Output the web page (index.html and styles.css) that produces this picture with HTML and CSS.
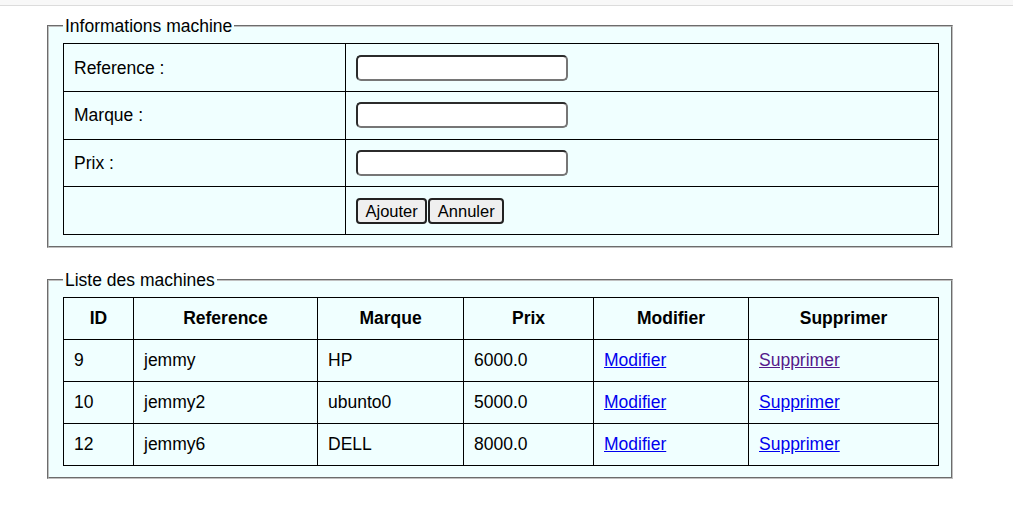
FILE: index.html
```html
<!DOCTYPE html>
<html lang="fr">
<head>
<meta charset="utf-8">
<title>Machines</title>
<link rel="stylesheet" href="styles.css">
</head>
<body>
<div class="topbar"></div>
<div class="page">
  <fieldset class="box box-form">
    <legend>Informations machine</legend>
    <table class="grid form-grid">
      <colgroup><col class="c-label"><col class="c-field"></colgroup>
      <tr><td>Reference :</td><td><input type="text" class="field"></td></tr>
      <tr><td>Marque :</td><td><input type="text" class="field"></td></tr>
      <tr><td>Prix :</td><td><input type="text" class="field"></td></tr>
      <tr><td></td><td class="actions"><button class="btn">Ajouter</button><button class="btn">Annuler</button></td></tr>
    </table>
  </fieldset>

  <fieldset class="box box-list">
    <legend>Liste des machines</legend>
    <table class="grid list-grid">
      <colgroup>
        <col class="c-id"><col class="c-ref"><col class="c-marque"><col class="c-prix"><col class="c-mod"><col class="c-sup">
      </colgroup>
      <tr><th>ID</th><th>Reference</th><th>Marque</th><th>Prix</th><th>Modifier</th><th>Supprimer</th></tr>
      <tr><td>9</td><td>jemmy</td><td>HP</td><td>6000.0</td><td><a href="#m9">Modifier</a></td><td><a class="visited" href="#s9">Supprimer</a></td></tr>
      <tr><td>10</td><td>jemmy2</td><td>ubunto0</td><td>5000.0</td><td><a href="#m10">Modifier</a></td><td><a href="#s10">Supprimer</a></td></tr>
      <tr><td>12</td><td>jemmy6</td><td>DELL</td><td>8000.0</td><td><a href="#m12">Modifier</a></td><td><a href="#s12">Supprimer</a></td></tr>
    </table>
  </fieldset>
</div>
</body>
</html>
```

FILE: styles.css
```css
html, body {
  margin: 0;
  padding: 0;
  background: #ffffff;
}
body {
  font-family: "Liberation Sans", Arial, sans-serif;
  font-size: 17.5px;
  color: #000;
}
.topbar {
  height: 5px;
  background: #f8f8f8;
  border-bottom: 1px solid #dcdcdc;
}
.page {
  padding: 0 0 0 47px;
}
.box {
  width: 875px;
  margin: 0;
  padding: 7px 12px 11px 14px;
  border: 2px groove #c0c0c0;
  background: #f0ffff;
}
.box-form {
  margin-top: 10px;
}
.box-list {
  margin-top: 22px;
}
.box legend {
  padding: 0 2px;
  line-height: 20px;
}
.grid {
  border-collapse: collapse;
  table-layout: fixed;
  width: 875px;
}
.grid td, .grid th {
  border: 1px solid #000;
  text-align: left;
}
.form-grid td {
  padding: 10.5px 10px 10.25px;
  height: 26px;
  line-height: 20px;
}
.c-label { width: 282px; }
.c-field { width: 593px; }
.field {
  box-sizing: border-box;
  display: block;
  width: 212px;
  height: 26px;
  margin: 0;
  border: 2px solid;
  border-color: #2b2b2b #767676 #767676 #2b2b2b;
  border-radius: 5px;
  background: #fff;
}
.actions {
  vertical-align: top;
}
.btn {
  font-family: "Liberation Sans", Arial, sans-serif;
  font-size: 16.5px;
  line-height: 18px;
  height: 26px;
  margin: 0 1px 0 0;
  padding: 2px 7.5px;
  border: 2px solid #222;
  border-radius: 4px;
  background: #efefef;
  color: #000;
  vertical-align: top;
}
.list-grid td, .list-grid th {
  padding: 10px 10px 10px;
  line-height: 21px;
}
.list-grid th {
  text-align: center;
  font-weight: bold;
}
.c-id { width: 70px; }
.c-ref { width: 184px; }
.c-marque { width: 146px; }
.c-prix { width: 130px; }
.c-mod { width: 155px; }
.c-sup { width: 190px; }
a {
  color: #0000ee;
  text-decoration: underline;
}
a.visited {
  color: #551a8b;
}
```
